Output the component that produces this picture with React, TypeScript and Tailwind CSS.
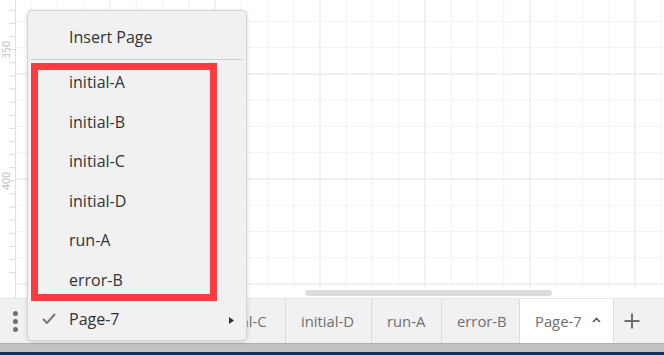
import React from "react";

const FONT = { fontFamily: '"Open Sans", "Noto Sans", sans-serif' };

function Grid() {
  const w = 649;
  const h = 287;
  const step = 26.25;
  const vx: { x: number; major: boolean }[] = [];
  for (let k = -12; k < 14; k++) {
    const x = 304 + k * step;
    if (x >= 0 && x <= w) vx.push({ x, major: ((k % 4) + 4) % 4 === 0 });
  }
  const hy: { y: number; major: boolean }[] = [];
  for (let k = -3; k < 10; k++) {
    const y = 74 + k * step;
    if (y >= 0 && y <= h) hy.push({ y, major: ((k % 4) + 4) % 4 === 0 });
  }
  return (
    <svg width={w} height={h} className="block">
      {vx
        .filter((l) => !l.major)
        .map((l, i) => (
          <line key={"vm" + i} x1={l.x} y1={0} x2={l.x} y2={h} stroke="#f3f3f3" strokeWidth={1} />
        ))}
      {hy
        .filter((l) => !l.major)
        .map((l, i) => (
          <line key={"hm" + i} x1={0} y1={l.y} x2={w} y2={l.y} stroke="#f3f3f3" strokeWidth={1} />
        ))}
      {vx
        .filter((l) => l.major)
        .map((l, i) => (
          <line key={"vM" + i} x1={l.x} y1={0} x2={l.x} y2={h} stroke="#e3e3e3" strokeWidth={1} />
        ))}
      {hy
        .filter((l) => l.major)
        .map((l, i) => (
          <line key={"hM" + i} x1={0} y1={l.y} x2={w} y2={l.y} stroke="#e3e3e3" strokeWidth={1} />
        ))}
    </svg>
  );
}

function Ruler() {
  const ticks: number[] = [];
  for (let k = 0; k < 22; k++) {
    const y = 10.2 + k * 13.125;
    if (y < 285) ticks.push(y);
  }
  return (
    <svg width={15} height={298} className="block">
      {ticks.map((y, i) => (
        <line key={i} x1={9} y1={y} x2={15} y2={y} stroke="#dadada" strokeWidth={1} />
      ))}
      <text
        x={0}
        y={0}
        transform="translate(9.5 50) rotate(-90)"
        textAnchor="middle"
        fontSize={10.5}
        fill="#bdbdbd"
        style={FONT}
      >
        350
      </text>
      <text
        x={0}
        y={0}
        transform="translate(9.5 181) rotate(-90)"
        textAnchor="middle"
        fontSize={10.5}
        fill="#bdbdbd"
        style={FONT}
      >
        400
      </text>
    </svg>
  );
}

function Tab({ label, width, active }: { label: string; width: number; active?: boolean }) {
  return (
    <div
      className={
        "h-full shrink-0 border-r border-[#dcdcdc] flex items-center pl-[15px] text-[14.8px] text-[#6f6f6f] " +
        (active ? "bg-white" : "")
      }
      style={{ width }}
    >
      <span className="leading-none whitespace-nowrap">{label}</span>
      {active && (
        <svg width={9} height={6} viewBox="0 0 9 6" className="ml-[10px] mt-[-3px]">
          <polyline points="1,5 4.5,1.5 8,5" fill="none" stroke="#555" strokeWidth={1.6} />
        </svg>
      )}
    </div>
  );
}

function MenuItem({ label, children }: { label: string; children?: React.ReactNode }) {
  return (
    <div className="relative h-[39.5px] flex items-center pl-[41px] text-[16px] text-[#333]">
      <span className="leading-none">{label}</span>
      {children}
    </div>
  );
}

export default function App() {
  return (
    <div className="relative w-[664px] h-[355px] overflow-hidden bg-white flex flex-col" style={FONT}>
      <div className="h-[298px] flex">
        <div className="w-[15px] h-full border-r border-[#e0e0e0] box-content bg-white">
          <Ruler />
        </div>
        <div className="flex-1 flex flex-col">
          <div className="h-[287px] overflow-hidden">
            <Grid />
          </div>
          <div className="h-[11px] relative">
            <div className="absolute left-[289px] top-[3px] w-[247px] h-[6px] rounded-full bg-[#dcdcdc]" />
          </div>
        </div>
      </div>

      <div className="h-[45px] bg-[#f1f1f3] flex border-t border-[#e4e4e4]">
        <div className="w-[30px] shrink-0 flex flex-col items-center justify-center gap-[3px]">
          <div className="w-[5px] h-[5px] rounded-full bg-[#6f6f6f]" />
          <div className="w-[5px] h-[5px] rounded-full bg-[#6f6f6f]" />
          <div className="w-[5px] h-[5px] rounded-full bg-[#6f6f6f]" />
        </div>
        <div className="flex-1 overflow-hidden flex justify-end">
          <Tab label="initial-A" width={86} />
          <Tab label="initial-B" width={86} />
          <Tab label="initial-C" width={86} />
          <Tab label="initial-D" width={86} />
          <Tab label="run-A" width={70} />
          <Tab label="error-B" width={78} />
          <Tab label="Page-7" width={94} active />
        </div>
        <div className="w-[36px] shrink-0 flex items-center justify-center">
          <svg width={16} height={16} viewBox="0 0 16 16">
            <line x1={8} y1={0.5} x2={8} y2={15.5} stroke="#6f6f6f" strokeWidth={2} />
            <line x1={0.5} y1={8} x2={15.5} y2={8} stroke="#6f6f6f" strokeWidth={2} />
          </svg>
        </div>
        <div className="w-[14px] shrink-0" />
      </div>
      <div className="h-[9px] bg-[#c2c2c2] border-t border-[#b0b0b0]" />
      <div className="h-[3px] bg-[#15325c]" />

      {/* Context menu */}
      <div className="absolute left-[27px] top-[10px] w-[220px] h-[331px] bg-[#f1f1f3] border border-[#d4d4d4] rounded-[5px] shadow-[0_1px_4px_rgba(0,0,0,0.15)] pt-[6px]">
        <MenuItem label="Insert Page" />
        <div className="mx-[3px] mt-[2px] mb-[3px] h-px bg-[#cfcfcf]" />
        <MenuItem label="initial-A" />
        <MenuItem label="initial-B" />
        <MenuItem label="initial-C" />
        <MenuItem label="initial-D" />
        <MenuItem label="run-A" />
        <MenuItem label="error-B" />
        <MenuItem label="Page-7">
          <svg width={14} height={11} viewBox="0 0 14 11" className="absolute left-[14px] top-[13px]">
            <polyline points="1,6 5,10 13,1" fill="none" stroke="#777" strokeWidth={2} />
          </svg>
          <svg width={5} height={7} viewBox="0 0 5 7" className="absolute left-[201px] top-[17px]">
            <polygon points="0,0 5,3.5 0,7" fill="#333" />
          </svg>
        </MenuItem>
      </div>

      {/* Red annotation rectangle */}
      <div className="absolute left-[31px] top-[63px] w-[186px] h-[238px] border-[7px] border-[#fe3b3f]" />
    </div>
  );
}
